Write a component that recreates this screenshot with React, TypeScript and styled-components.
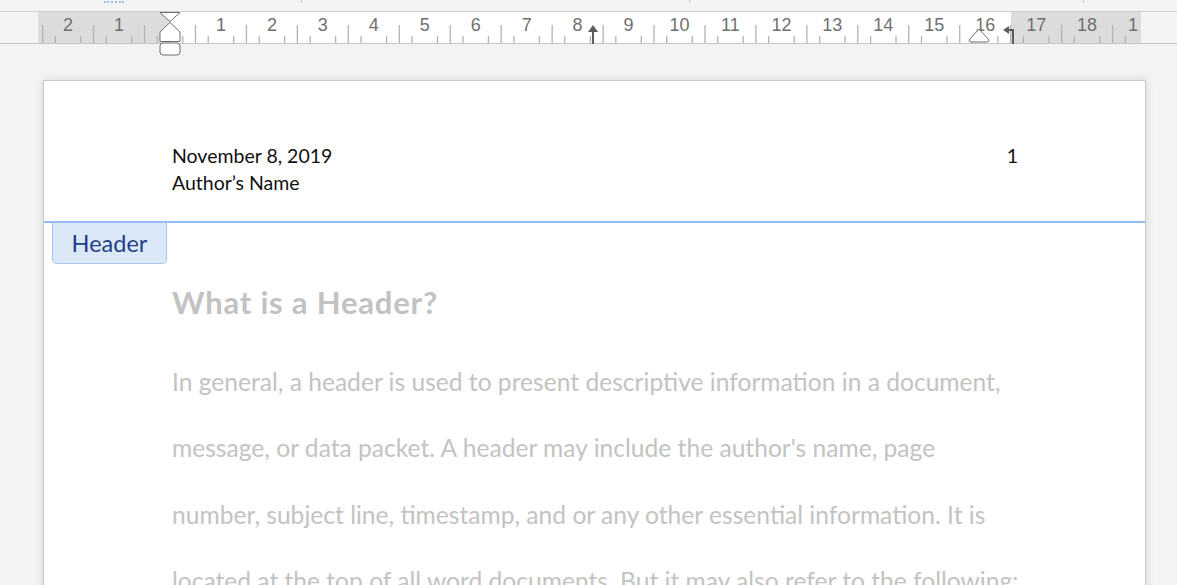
import React from 'react';
import styled, { createGlobalStyle } from 'styled-components';

const GlobalStyle = createGlobalStyle`
  html, body {
    margin: 0;
    padding: 0;
  }
  body {
    background: #f3f3f3;
    overflow: hidden;
    font-family: Lato, "Noto Sans", sans-serif;
  }
`;

const ORIGIN = 170;
const CM = 50.95;
const RULER_LEFT = 38;
const RULER_RIGHT = 1141;

const Screen = styled.div`
  width: 1177px;
  height: 585px;
  overflow: hidden;
  display: flex;
  flex-direction: column;
  background: #f3f3f3;
`;

const TopStrip = styled.div`
  height: 11px;
  flex: none;
  display: flex;
  align-items: flex-start;
  overflow: hidden;
  background: #f4f4f4;
`;

const StripLabel = styled.span`
  margin: -15px 0 0 22px;
  font-family: "Liberation Sans", Arial, sans-serif;
  font-size: 16px;
  line-height: 18px;
  letter-spacing: 2px;
  color: #2a2a2a;
`;

const StripDots = styled.span`
  width: 20px;
  height: 1px;
  margin-left: 24px;
  border-bottom: 2px dotted #9fc0ee;
`;

const StripDivider = styled.span<{ $gap: number }>`
  width: 1px;
  height: 3px;
  margin-left: ${(p) => p.$gap}px;
  background: #c8c8c8;
`;

const RulerBar = styled.div`
  height: 31px;
  flex: none;
  border-top: 1px solid #cdcdcd;
  border-bottom: 1px solid #c4c4c4;
  background: #f4f4f4;
  position: relative;
  z-index: 2;
`;

const RulerSvg = styled.svg`
  display: block;
  overflow: visible;
`;

const Workspace = styled.div`
  flex: 1;
  padding: 36px 31px 0 43px;
`;

const Page = styled.div`
  box-sizing: border-box;
  width: 1103px;
  min-height: 620px;
  background: #fff;
  border: 1px solid #c8c8c8;
  box-shadow: 0 0 9px rgba(0, 0, 0, 0.12);
`;

const HeaderArea = styled.div`
  height: 142px;
  box-sizing: border-box;
  padding: 61px 127px 0 128px;
  border-bottom: 2px solid #97baf2;
  display: flex;
  justify-content: space-between;
  align-items: flex-start;
  font-family: Lato, "Noto Sans", sans-serif;
  font-size: 19.5px;
  line-height: 27px;
  color: #111;
`;

const HeaderLines = styled.div`
  display: flex;
  flex-direction: column;
`;

const PageNumber = styled.span`
  padding-right: 0;
`;

const Body = styled.div`
  position: relative;
  padding: 61px 0 0 128px;
`;

const HeaderTab = styled.div`
  position: absolute;
  left: 8px;
  top: 0;
  box-sizing: border-box;
  width: 115px;
  height: 41px;
  display: flex;
  align-items: center;
  justify-content: center;
  padding-bottom: 1px;
  background: #dbe8f7;
  border: 1px solid #a4c3ef;
  border-top: none;
  border-radius: 0 0 5px 5px;
  font-family: Lato, "Noto Sans", sans-serif;
  font-size: 23.5px;
  color: #1f3f87;
`;

const Title = styled.h1`
  margin: 0;
  font-family: Lato, "Noto Sans", sans-serif;
  font-weight: 700;
  font-size: 31px;
  line-height: 36px;
  letter-spacing: 0.8px;
  color: #c2c2c2;
`;

const Paragraph = styled.div`
  margin-top: 29px;
  font-family: Lato, "Noto Sans", sans-serif;
  font-size: 24.6px;
  line-height: 66.3px;
  color: #c3c3c3;
`;

const Line = styled.div`
  white-space: nowrap;
`;

const lines = [
  'In general, a header is used to present descriptive information in a document,',
  "message, or data packet. A header may include the author's name, page",
  'number, subject line, timestamp, and or any other essential information. It is',
  'located at the top of all word documents. But it may also refer to the following:',
];

const Ruler: React.FC = () => {
  const ticks: { x: number; tall: boolean }[] = [];
  for (let q = -2.75; q <= 19.5; q += 0.25) {
    if (Number.isInteger(q)) continue;
    const x = ORIGIN + q * CM;
    if (x < RULER_LEFT + 1 || x > RULER_RIGHT - 1) continue;
    ticks.push({ x, tall: Math.abs(q % 1) === 0.5 });
  }
  const numbers: number[] = [-2, -1];
  for (let n = 1; n <= 19; n++) numbers.push(n);

  return (
    <RulerSvg width={1177} height={31} viewBox="0 0 1177 31">
      <defs>
        <clipPath id="ruler-clip">
          <rect x={RULER_LEFT} y={0} width={1138 - RULER_LEFT} height={31} />
        </clipPath>
      </defs>
      <rect x={RULER_LEFT} y={0} width={RULER_RIGHT - RULER_LEFT} height={31} fill="#fff" />
      <rect x={RULER_LEFT} y={0} width={ORIGIN - RULER_LEFT} height={31} fill="#dcdcdc" />
      <rect x={1011} y={0} width={RULER_RIGHT - 1011} height={31} fill="#dcdcdc" />
      <g clipPath="url(#ruler-clip)">
        {ticks.map((t, i) => (
          <line
            key={i}
            x1={t.x}
            x2={t.x}
            y1={t.tall ? 13 : 24}
            y2={31}
            stroke="#b2b2b2"
            strokeWidth={1.3}
          />
        ))}
        {numbers.map((n) => (
          <text
            key={n}
            x={ORIGIN + n * CM}
            y={19}
            textAnchor="middle"
            fontFamily='"Liberation Sans", Arial, sans-serif'
            fontSize={18}
            fill="#707070"
          >
            {Math.abs(n)}
          </text>
        ))}
      </g>
      {/* first-line / hanging indent */}
      <path d="M160 0.5 H180 L170 9.5 Z" fill="#fff" stroke="#6e6e6e" strokeWidth={1} />
      <path d="M170 10.5 L180 20 V29.5 H160 V20 Z" fill="#fff" stroke="#6e6e6e" strokeWidth={1} />
      <rect x={160} y={31} width={20} height={12} rx={3} fill="#fff" stroke="#6e6e6e" strokeWidth={1} />
      {/* center tab */}
      <path d="M588 20 L593 13 L598 20 Z" fill="#5c5c5c" />
      <rect x={592} y={19} width={2} height={13} fill="#5c5c5c" />
      {/* right indent */}
      <path d="M979 17 L989 28 Q989 30 987 30 H971 Q969 30 969 28 Z" fill="#fff" stroke="#6e6e6e" strokeWidth={1} />
      {/* right tab */}
      <path d="M1003 18 L1009 14 V22 Z" fill="#5c5c5c" />
      <rect x={1008} y={17} width={6} height={2} fill="#5c5c5c" />
      <rect x={1012} y={17} width={2} height={15} fill="#5c5c5c" />
    </RulerSvg>
  );
};

const App: React.FC = () => {
  return (
    <Screen>
      <GlobalStyle />
      <TopStrip>
        <StripLabel>Footer</StripLabel>
        <StripDots />
        <StripDivider $gap={177} />
        <StripDivider $gap={387} />
        <StripDivider $gap={393} />
      </TopStrip>
      <RulerBar>
        <Ruler />
      </RulerBar>
      <Workspace>
        <Page>
          <HeaderArea>
            <HeaderLines>
              <span>November 8, 2019</span>
              <span>Author’s Name</span>
            </HeaderLines>
            <PageNumber>1</PageNumber>
          </HeaderArea>
          <Body>
            <HeaderTab>Header</HeaderTab>
            <Title>What is a Header?</Title>
            <Paragraph>
              {lines.map((l) => (
                <Line key={l}>{l}</Line>
              ))}
            </Paragraph>
          </Body>
        </Page>
      </Workspace>
    </Screen>
  );
};

export default App;
